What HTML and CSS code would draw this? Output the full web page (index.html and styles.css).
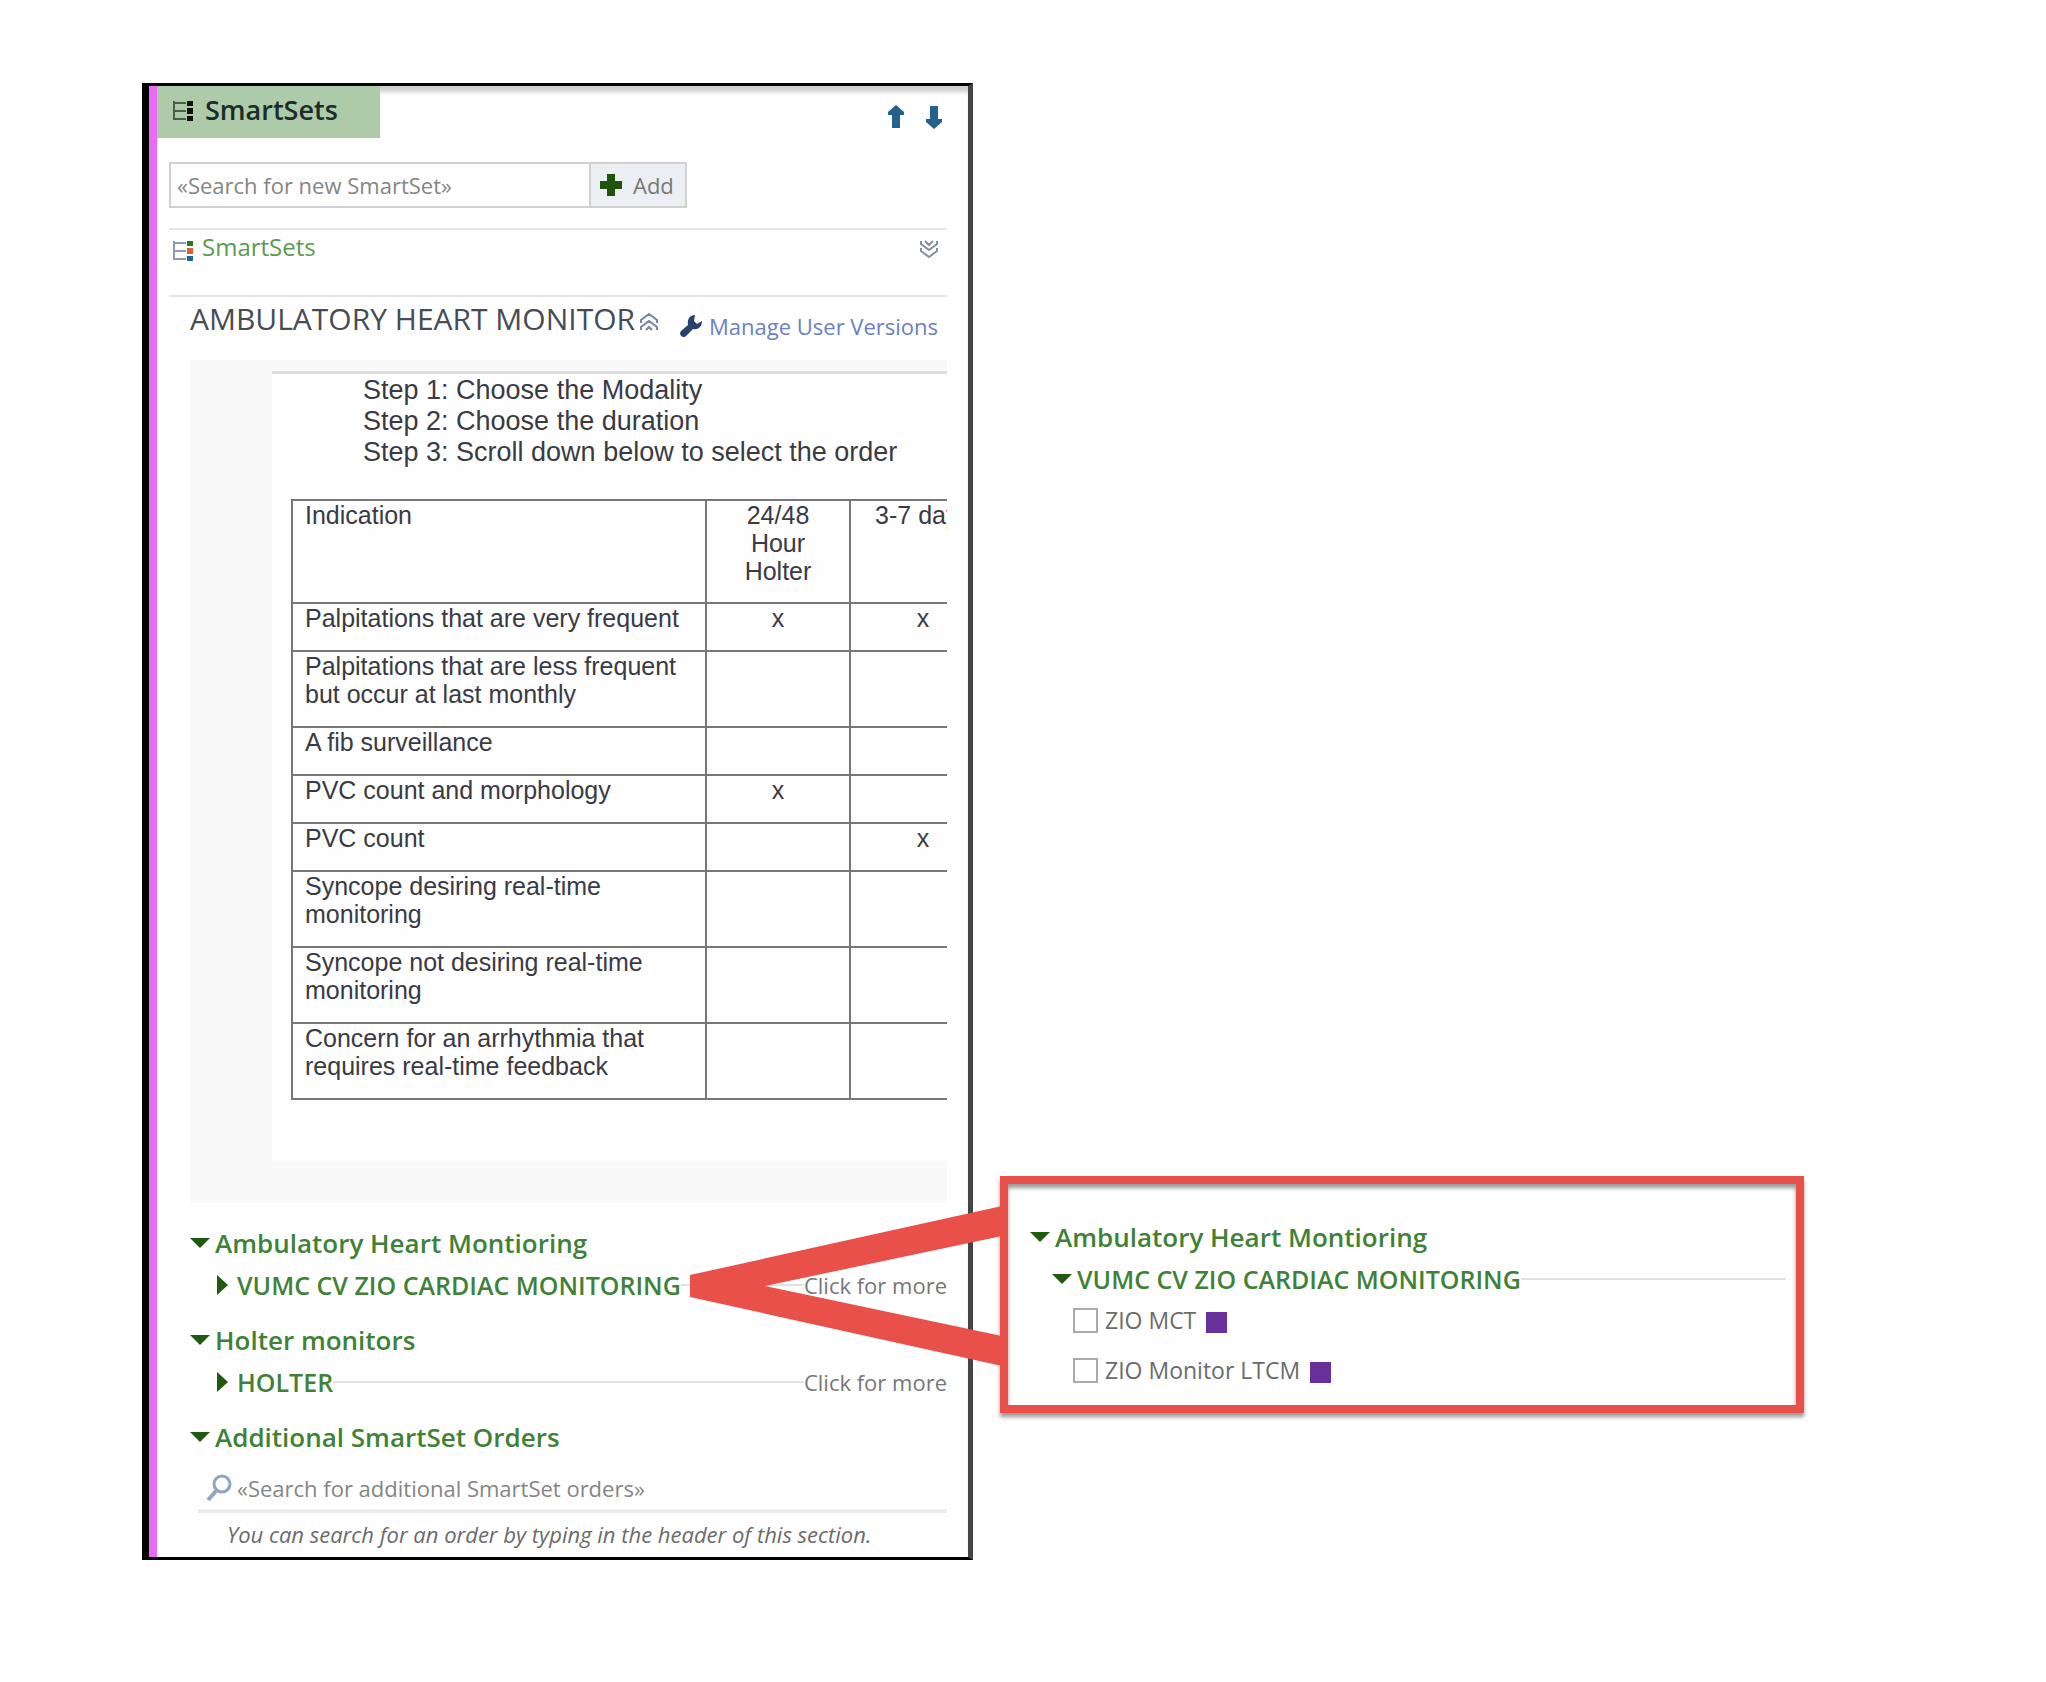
FILE: index.html
```html
<!doctype html>
<html lang="en">

<head>
    <meta charset="utf-8">
    <meta name="viewport" content="width=device-width, initial-scale=1">
    <title>SmartSets</title>
    <link rel="stylesheet" href="styles.css">
</head>

<body>
<main class="page">
    <!-- left side: the SmartSets panel -->
    <section class="panel">
        <header class="topbar">
            <h1 class="tab">
                <svg class="tree-icon" viewBox="0 0 22 22" width="22" height="22">
                    <path d="M2 1v19M2 3h12M2 11h12M2 19h12" stroke="#4c5f4c" stroke-width="2" fill="none"/>
                    <path d="M15 1h6v5h-6zM15 8h6v6h-6zM15 16h6v5h-6z" fill="#111"/>
                </svg>
                SmartSets
            </h1>
            <div class="move">
                <button class="icon-button" aria-label="Move up">
                    <svg viewBox="0 0 16 24" width="16" height="24"><path d="M8 0l8 7v3h-4v13H4V10H0V7z" fill="#23628c"/></svg>
                </button>
                <button class="icon-button" aria-label="Move down">
                    <svg viewBox="0 0 16 24" width="16" height="24"><path d="M8 24l8-7v-3h-4V1H4v13H0v3z" fill="#23628c"/></svg>
                </button>
            </div>
        </header>

        <form class="add-form">
            <input class="add-input" type="text" aria-label="Search for new SmartSet" placeholder="«Search for new SmartSet»">
            <button class="add-button" type="button">
                <svg viewBox="0 0 22 22" width="22" height="22"><path d="M7 0h8v7h7v8h-7v7H7v-7H0V7h7z" fill="#22530d"/></svg>
                Add
            </button>
        </form>

        <div class="set-row">
            <svg class="tree-icon" viewBox="0 0 22 22" width="22" height="22">
                <path d="M2 1v19M2 3h12M2 11h12M2 19h12" stroke="#8d9bb8" stroke-width="2" fill="none"/>
                <path d="M15 1h6v5h-6z" fill="#2c7a1e"/>
                <path d="M15 8h6v6h-6z" fill="#d9603b"/>
                <path d="M15 16h6v5h-6z" fill="#1f6796"/>
            </svg>
            <a class="set-link" href="#">SmartSets</a>
            <button class="icon-button" aria-label="Expand">
                <svg viewBox="0 0 18 18" width="18" height="18"><path d="M1 1v3l8 6 8-6V1M1 8v3l8 6 8-6V8M5 1l4 4 4-4" stroke="#8291a0" stroke-width="2" fill="none"/></svg>
            </button>
        </div>

        <div class="title-row">
            <h2 class="title">AMBULATORY HEART MONITOR</h2>
            <button class="icon-button" aria-label="Collapse">
                <svg viewBox="0 0 18 18" width="18" height="18"><path d="M1 10V7l8-6 8 6v3M1 17v-3l8-6 8 6v3M6 17l3-3 3 3" stroke="#7388a5" stroke-width="2" fill="none"/></svg>
            </button>
            <a class="manage" href="#">
                <svg viewBox="0 0 22 22" width="22" height="22"><path d="M1 16l7-6c-1-6 2-10 7-10l-1 6 3 3 5-3c0 6-4 9-9 8l-7 7c-3 3-8-1-5-5z" fill="#27436d"/></svg>
                <span>Manage User Versions</span>
            </a>
        </div>

        <div class="guide">
            <div class="sheet">
                <p class="steps">
                    Step 1: Choose the Modality<br>
                    Step 2: Choose the duration<br>
                    Step 3: Scroll down below to select the order
                </p>
                <table class="indications">
                    <colgroup>
                        <col class="col-name">
                        <col class="col-mark">
                        <col>
                    </colgroup>
                    <tr class="head"><th>Indication</th><th>24/48 Hour Holter</th><th>3-7 days</th></tr>
                    <tr><td>Palpitations that are very frequent</td><td>x</td><td>x</td></tr>
                    <tr class="tall"><td>Palpitations that are less frequent but occur at last monthly</td><td></td><td></td></tr>
                    <tr><td>A fib surveillance</td><td></td><td></td></tr>
                    <tr><td>PVC count and morphology</td><td>x</td><td></td></tr>
                    <tr><td>PVC count</td><td></td><td>x</td></tr>
                    <tr class="tall"><td>Syncope desiring real-time monitoring</td><td></td><td></td></tr>
                    <tr class="tall"><td>Syncope not desiring real-time monitoring</td><td></td><td></td></tr>
                    <tr class="tall"><td>Concern for an arrhythmia that requires real-time feedback</td><td></td><td></td></tr>
                </table>
            </div>
        </div>

        <div class="groups">
            <div class="group">
                <h3 class="group-name"><svg class="arrow" viewBox="0 0 20 10" width="20" height="10"><path d="M0 0h20L10 10z"/></svg>Ambulatory Heart Montioring</h3>
                <div class="sub">
                    <svg class="arrow" viewBox="0 0 20 20" width="20" height="20"><path d="M0 0l11 10L0 20z"/></svg>
                    <span class="sub-name">VUMC CV ZIO CARDIAC MONITORING</span>
                    <span class="line"></span>
                    <a class="more" href="#">Click for more</a>
                </div>
            </div>
            <div class="group">
                <h3 class="group-name"><svg class="arrow" viewBox="0 0 20 10" width="20" height="10"><path d="M0 0h20L10 10z"/></svg>Holter monitors</h3>
                <div class="sub">
                    <svg class="arrow" viewBox="0 0 20 20" width="20" height="20"><path d="M0 0l11 10L0 20z"/></svg>
                    <span class="sub-name">HOLTER</span>
                    <span class="line"></span>
                    <a class="more" href="#">Click for more</a>
                </div>
            </div>
            <div class="group">
                <h3 class="group-name"><svg class="arrow" viewBox="0 0 20 10" width="20" height="10"><path d="M0 0h20L10 10z"/></svg>Additional SmartSet Orders</h3>
                <label class="order-search">
                    <svg viewBox="0 0 26 28" width="26" height="28"><circle cx="16" cy="10" r="8" stroke="#91a5c0" stroke-width="3" fill="none"/><path d="M10 17l-8 9" stroke="#91a5c0" stroke-width="4"/></svg>
                    <input class="order-input" type="text" aria-label="Search for additional SmartSet orders" placeholder="«Search for additional SmartSet orders»">
                </label>
                <p class="hint">You can search for an order by typing in the header of this section.</p>
            </div>
        </div>
    </section>

    <!-- right side: the opened group -->
    <aside class="callout">
        <svg class="pointer" viewBox="0 0 318 228" width="318" height="228">
            <path d="M0 91L312 22V52L75 102L312 152V182L0 113z" fill="#e9504a"/>
        </svg>
        <h3 class="group-name"><svg class="arrow" viewBox="0 0 20 10" width="20" height="10"><path d="M0 0h20L10 10z"/></svg>Ambulatory Heart Montioring</h3>
        <div class="sub">
            <svg class="arrow" viewBox="0 0 20 10" width="20" height="10"><path d="M0 0h20L10 10z"/></svg>
            <span class="sub-name">VUMC CV ZIO CARDIAC MONITORING</span>
            <span class="line"></span>
        </div>
        <div class="orders">
            <label class="order"><input type="checkbox">ZIO MCT <span class="badge"></span></label>
            <label class="order"><input type="checkbox">ZIO Monitor LTCM <span class="badge"></span></label>
        </div>
    </aside>
</main>
</body>

</html>
```

FILE: styles.css
```css
* {
    box-sizing: border-box;
}

body {
    margin: 0;
    background-color: #fff;
    color: #6b6b6b;
    font-family: "Open Sans", "Noto Sans", sans-serif;
    font-size: 22px;
}

h1, h2, h3, p {
    margin: 0;
}

a {
    text-decoration: none;
}

svg {
    flex: none;
}

.page {
    display: grid;
    grid-template-columns: minmax(0, 831fr) minmax(0, 804fr);
    column-gap: 27px;
    padding: 83px 242px 83px 142px;
}

/* left panel */
.panel {
    border: solid #000;
    border-width: 3px 5px 3px 7px;
    border-right-color: #444;
    box-shadow: inset 8px 0 0 #e96af3, inset 0 8px 4px -2px #ccc;
    padding: 0 21px 5px 20px;
}

.icon-button {
    display: flex;
    border: 0;
    padding: 0;
    background: none;
}

.topbar {
    display: flex;
    justify-content: space-between;
    height: 52px;
    margin-left: -12px;
}

.tab {
    display: flex;
    gap: 11px;
    width: 223px;
    padding: 4px 0 0 15px;
    background-color: #adcba8;
    color: #1d2b2b;
    font-size: 27px;
    font-weight: 600;
    line-height: 40px;
}

.tab .tree-icon {
    margin-top: 10px;
}

.move {
    display: flex;
    gap: 22px;
    padding: 19px 5px 0 0;
}

.add-form {
    display: flex;
    width: 518px;
    height: 46px;
    margin-top: 24px;
    border: 2px solid #d0d0d0;
}

.add-input {
    flex: 1;
    min-width: 0;
    border: 0;
    padding: 0 6px;
    background: none;
    font: inherit;
}

::placeholder {
    color: #858585;
    opacity: 1;
}

.add-button {
    display: flex;
    align-items: center;
    gap: 11px;
    width: 96px;
    border: 0;
    border-left: 2px solid #d0d0d0;
    padding: 0 0 0 9px;
    background-color: #ebeff4;
    color: #777;
    font: inherit;
}

.set-row {
    display: flex;
    gap: 8px;
    height: 67px;
    margin-top: 20px;
    border-top: 2px solid #e3e7e7;
    padding: 0 9px 0 3px;
}

.set-row .tree-icon {
    margin-top: 10px;
}

.set-link {
    flex: 1;
    color: #5b9a50;
    font-size: 24px;
    line-height: 34px;
}

.set-row .icon-button {
    margin-top: 10px;
    height: 18px;
}

.title-row {
    display: flex;
    align-items: flex-start;
    gap: 5px;
    height: 65px;
    border-top: 2px solid #e3e7e7;
    padding: 4px 0 0 21px;
}

.title {
    color: #464c54;
    font-size: 30px;
    font-weight: 400;
    line-height: 36px;
    white-space: nowrap;
}

.title-row .icon-button {
    margin-top: 12px;
}

.manage {
    display: flex;
    align-items: center;
    gap: 7px;
    margin-left: 17px;
    padding-top: 7px;
    color: #6c80c4;
    line-height: 36px;
    white-space: nowrap;
}

/* guide with the table */
.guide {
    margin-left: 21px;
    padding: 11px 0 42px 82px;
    background-color: #f9f9f9;
    overflow: hidden;
}

.sheet {
    border-top: 3px solid #ddd;
    padding: 1px 0 61px 19px;
    background-color: #fefefe;
    color: #3a3a44;
    font-family: "Liberation Sans", Arial, sans-serif;
    overflow: hidden;
}

.steps {
    padding-left: 72px;
    font-size: 27px;
    line-height: 31px;
    white-space: nowrap;
}

/* wider than the sheet, the last column runs off its edge */
.indications {
    width: 706px;
    margin-top: 31px;
    border-collapse: collapse;
    table-layout: fixed;
    font-size: 25px;
    line-height: 28px;
}

.col-name {
    width: 414px;
}

.col-mark {
    width: 144px;
}

.indications th,
.indications td {
    height: 48px;
    border: 2px solid #777;
    padding: 0 30px;
    font-weight: 400;
    text-align: center;
    vertical-align: top;
}

.indications th:last-child {
    padding: 0;
}

.indications th:first-child,
.indications td:first-child {
    padding: 0 12px;
    text-align: left;
}

.indications .head th {
    height: 103px;
}

.indications .tall td {
    height: 76px;
}

/* order groups */
.groups {
    display: flex;
    flex-direction: column;
    gap: 19px;
    margin-top: 22px;
    padding-left: 21px;
}

.arrow {
    fill: #1f5a10;
}

.group-name {
    display: flex;
    align-items: center;
    gap: 5px;
    color: #3f8237;
    font-size: 26px;
    font-weight: 600;
    line-height: 36px;
}

.sub {
    display: flex;
    align-items: center;
    margin-top: 6px;
    padding-left: 27px;
    line-height: 36px;
    white-space: nowrap;
}

.sub-name {
    color: #3f8237;
    font-size: 25px;
    font-weight: 600;
}

.line {
    flex: 1;
    height: 2px;
    background-color: #e2e2e2;
}

.more {
    color: #777;
}

.order-search {
    display: flex;
    align-items: center;
    gap: 5px;
    height: 46px;
    margin: 12px 0 0 8px;
    border-bottom: 4px solid #ececec;
    padding-left: 8px;
}

.order-input {
    flex: 1;
    border: 0;
    padding: 0;
    background: none;
    font: inherit;
}

.hint {
    padding: 3px 0 0 37px;
    font-style: italic;
    line-height: 36px;
    white-space: nowrap;
}

/* opened group on the right */
.callout {
    position: relative;
    align-self: end;
    margin-bottom: 147px;
    border: 8px solid #e9504a;
    padding: 35px 10px 17px 22px;
    box-shadow: 0 4px 4px #999, inset 0 4px 4px #999;
}

.pointer {
    position: absolute;
    top: 0;
    right: 100%;
}

.callout .sub {
    padding-left: 22px;
}

.callout .sub .arrow {
    margin-right: 5px;
}

.orders {
    display: flex;
    flex-direction: column;
    gap: 14px;
    padding: 5px 0 0 43px;
}

.order {
    display: flex;
    align-items: center;
    gap: 7px;
    font-size: 23px;
    line-height: 36px;
}

.order input {
    appearance: none;
    width: 25px;
    height: 25px;
    margin: 0;
    border: 2px solid #aaa;
    background-color: #fff;
}

.badge {
    width: 21px;
    height: 21px;
    margin: 4px 0 0 3px;
    background-color: #68309a;
}
```
